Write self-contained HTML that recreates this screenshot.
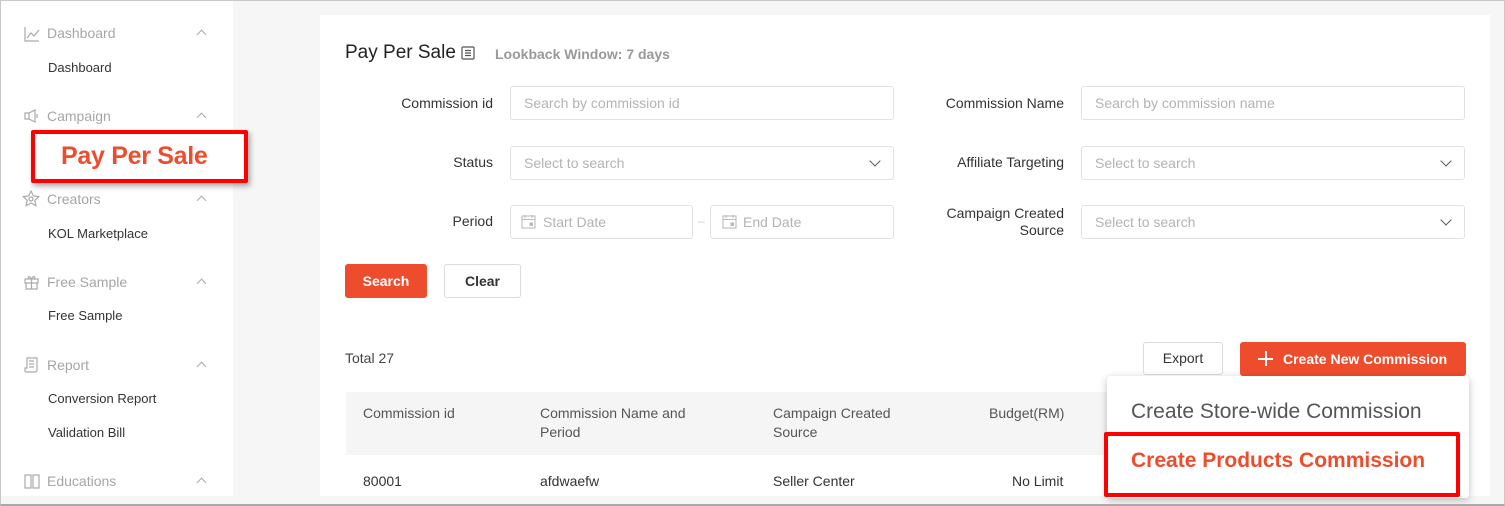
<!DOCTYPE html>
<html><head><style>
*{margin:0;padding:0;box-sizing:border-box}
html,body{width:1505px;height:506px;overflow:hidden}
body{font-family:"Liberation Sans",sans-serif;background:#f6f6f6;position:relative}
.a{position:absolute;white-space:nowrap}
.frame{position:absolute;left:0;top:0;width:1505px;height:506px;border:1px solid #c8c8c8;pointer-events:none;border-bottom:2px solid #aaa}
.side{position:absolute;left:0;top:0;width:233px;height:496px;background:#fff}
.gh{color:#a6a6a6;font-size:14px}
.it{color:#333;font-size:13px}
.car{position:absolute;left:198px;width:7px;height:7px;border-left:1.5px solid #aaa;border-top:1.5px solid #aaa;transform:rotate(45deg)}
.card{position:absolute;left:320px;top:15px;width:1170px;height:481px;background:#fff}
.lbl{color:#333;font-size:14px;text-align:right}
.inp{position:absolute;height:34px;border:1px solid #e2e2e2;border-radius:3px;color:#b3b3b3;font-size:14px;line-height:32px;padding-left:13px}
.chev{position:absolute;right:14px;top:10px;width:8px;height:8px;border-right:1.5px solid #555;border-bottom:1.5px solid #555;transform:rotate(45deg)}
.th{color:#555;font-size:14px;line-height:19px}
.td{color:#333;font-size:14px}
</style></head><body>
<div class="side">
 <svg class="a" style="left:24px;top:26px" width="16" height="16" viewBox="0 0 16 16" fill="none" stroke="#aaa" stroke-width="1.2"><path d="M1 1v14h14M3 12l4-5 3 3 5-6"/></svg>
 <div class="a gh" style="left:47px;top:25px">Dashboard</div><div class="car" style="top:31px"></div>
 <div class="a it" style="left:48px;top:60px">Dashboard</div>
 <svg class="a" style="left:24px;top:109px" width="16" height="14" viewBox="0 0 16 14" fill="none" stroke="#aaa" stroke-width="1.2"><path d="M1 4h4l6-3v12l-6-3H1zM5 4v6M13 5v4"/></svg>
 <div class="a gh" style="left:47px;top:108px">Campaign</div><div class="car" style="top:114px"></div>
 <svg class="a" style="left:22px;top:190px" width="18" height="17" viewBox="0 0 18 17" fill="none" stroke="#aaa" stroke-width="1.2"><path d="M9 1l2.4 5 5.4.6-4 3.7 1.1 5.4L9 13l-4.9 2.7 1.1-5.4-4-3.7 5.4-.6z"/><circle cx="9" cy="9" r="2"/></svg>
 <div class="a gh" style="left:47px;top:191px">Creators</div><div class="car" style="top:197px"></div>
 <div class="a it" style="left:48px;top:226px">KOL Marketplace</div>
 <svg class="a" style="left:24px;top:274px" width="15" height="16" viewBox="0 0 15 16" fill="none" stroke="#aaa" stroke-width="1.2"><path d="M1 5h13v4H1zM2 9h11v6H2zM7.5 5v10M7.5 5C5 1 3 3 5 5M7.5 5c2.5-4 4.5-2 2.5 0"/></svg>
 <div class="a gh" style="left:47px;top:274px">Free Sample</div><div class="car" style="top:280px"></div>
 <div class="a it" style="left:48px;top:308px">Free Sample</div>
 <svg class="a" style="left:24px;top:357px" width="14" height="16" viewBox="0 0 14 16" fill="none" stroke="#aaa" stroke-width="1.2"><path d="M3 1h10v12a2 2 0 0 1-2 2H2a1 1 0 0 1-1-1v-3h2zM5 4h5M5 7h5M5 10h5"/></svg>
 <div class="a gh" style="left:47px;top:357px">Report</div><div class="car" style="top:363px"></div>
 <div class="a it" style="left:48px;top:391px">Conversion Report</div>
 <div class="a it" style="left:48px;top:425px">Validation Bill</div>
 <svg class="a" style="left:24px;top:473px" width="16" height="16" viewBox="0 0 16 16" fill="none" stroke="#aaa" stroke-width="1.2"><path d="M1 2h6v13H1zM9 2h6v13H9z"/></svg>
 <div class="a gh" style="left:47px;top:473px">Educations</div><div class="car" style="top:479px"></div>
</div>
<div class="a" style="left:31px;top:130px;width:217px;height:53px;border:4px solid #f00;background:#fff;border-radius:2px;box-shadow:2px 3px 6px rgba(0,0,0,.35)"></div>
<div class="a" style="left:61px;top:142px;color:#ee4d2d;font-size:25px;font-weight:bold;letter-spacing:-.3px">Pay Per Sale</div>

<div class="card"></div>
<div class="a" style="left:345px;top:42px;color:#222;font-size:19px">Pay Per Sale</div>
<svg class="a" style="left:461px;top:46px" width="14" height="14" viewBox="0 0 14 14" fill="none" stroke="#555" stroke-width="1.2"><rect x="1" y="1" width="12" height="12" rx="1"/><path d="M4 4.5h6M4 7h6M4 9.5h6"/></svg>
<div class="a" style="left:495px;top:46px;color:#999;font-size:14px;font-weight:bold">Lookback Window: 7 days</div>

<div class="a lbl" style="left:360px;width:133px;top:95px">Commission id</div>
<div class="inp" style="left:510px;top:86px;width:384px">Search by commission id</div>
<div class="a lbl" style="left:360px;width:133px;top:154px">Status</div>
<div class="inp" style="left:510px;top:146px;width:384px">Select to search<div class="chev"></div></div>
<div class="a lbl" style="left:360px;width:133px;top:213px">Period</div>
<div class="inp" style="left:510px;top:205px;width:183px;padding-left:32px">Start Date</div>
<div class="a" style="left:698px;top:214px;color:#ccc;font-size:12px">–</div>
<div class="inp" style="left:710px;top:205px;width:184px;padding-left:32px">End Date</div>
<svg class="a" style="left:521px;top:214px" width="15" height="15" viewBox="0 0 15 15" fill="none" stroke="#bbb" stroke-width="1.1"><rect x="1" y="2" width="13" height="12"/><path d="M1 5.5h13M4 1v3M11 1v3"/><rect x="9" y="9" width="2.5" height="2.5" fill="#bbb"/></svg>
<svg class="a" style="left:722px;top:214px" width="15" height="15" viewBox="0 0 15 15" fill="none" stroke="#bbb" stroke-width="1.1"><rect x="1" y="2" width="13" height="12"/><path d="M1 5.5h13M4 1v3M11 1v3"/><rect x="9" y="9" width="2.5" height="2.5" fill="#bbb"/></svg>

<div class="a lbl" style="left:920px;width:144px;top:95px">Commission Name</div>
<div class="inp" style="left:1081px;top:86px;width:384px">Search by commission name</div>
<div class="a lbl" style="left:920px;width:144px;top:154px">Affiliate Targeting</div>
<div class="inp" style="left:1081px;top:146px;width:384px">Select to search<div class="chev"></div></div>
<div class="a lbl" style="left:920px;width:144px;top:205px;line-height:17px">Campaign Created<br>Source</div>
<div class="inp" style="left:1081px;top:205px;width:384px">Select to search<div class="chev"></div></div>

<div class="a" style="left:345px;top:264px;width:82px;height:34px;background:#ee4d2d;border-radius:3px;color:#fff;font-size:14px;font-weight:bold;text-align:center;line-height:34px">Search</div>
<div class="a" style="left:444px;top:264px;width:77px;height:34px;border:1px solid #ddd;border-radius:3px;color:#333;font-size:14px;font-weight:bold;text-align:center;line-height:32px">Clear</div>

<div class="a" style="left:345px;top:350px;color:#444;font-size:14px">Total 27</div>
<div class="a" style="left:1143px;top:342px;width:80px;height:33px;border:1px solid #ddd;border-radius:3px;color:#333;font-size:14px;text-align:center;line-height:31px">Export</div>
<div class="a" style="left:1240px;top:342px;width:226px;height:34px;background:#ee4d2d;border-radius:3px;color:#fff;font-size:14px;font-weight:bold;line-height:34px;padding-left:43px">Create New Commission</div>
<div class="a" style="left:1258px;top:358px;width:15px;height:1.5px;background:#fff"></div>
<div class="a" style="left:1265px;top:351px;width:1.5px;height:15px;background:#fff"></div>

<div class="a" style="left:346px;top:392px;width:1120px;height:63px;background:#f5f5f5"></div>
<div class="a th" style="left:363px;top:404px">Commission id</div>
<div class="a th" style="left:540px;top:404px">Commission Name and<br>Period</div>
<div class="a th" style="left:773px;top:404px">Campaign Created<br>Source</div>
<div class="a th" style="left:989px;top:404px">Budget(RM)</div>
<div class="a td" style="left:363px;top:473px">80001</div>
<div class="a td" style="left:540px;top:473px">afdwaefw</div>
<div class="a td" style="left:773px;top:473px">Seller Center</div>
<div class="a td" style="left:1012px;top:473px">No Limit</div>

<div class="a" style="left:1107px;top:376px;width:362px;height:122px;background:#fff;box-shadow:0 2px 8px rgba(0,0,0,.25);border-radius:3px"></div>
<div class="a" style="left:1131px;top:400px;color:#555;font-size:21px">Create Store-wide Commission</div>
<div class="a" style="left:1104px;top:432px;width:356px;height:65px;border:4px solid #f00;border-radius:2px"></div>
<div class="a" style="left:1131px;top:449px;color:#ee4d2d;font-size:21px;font-weight:bold">Create Products Commission</div>
<div class="frame"></div>
</body></html>
